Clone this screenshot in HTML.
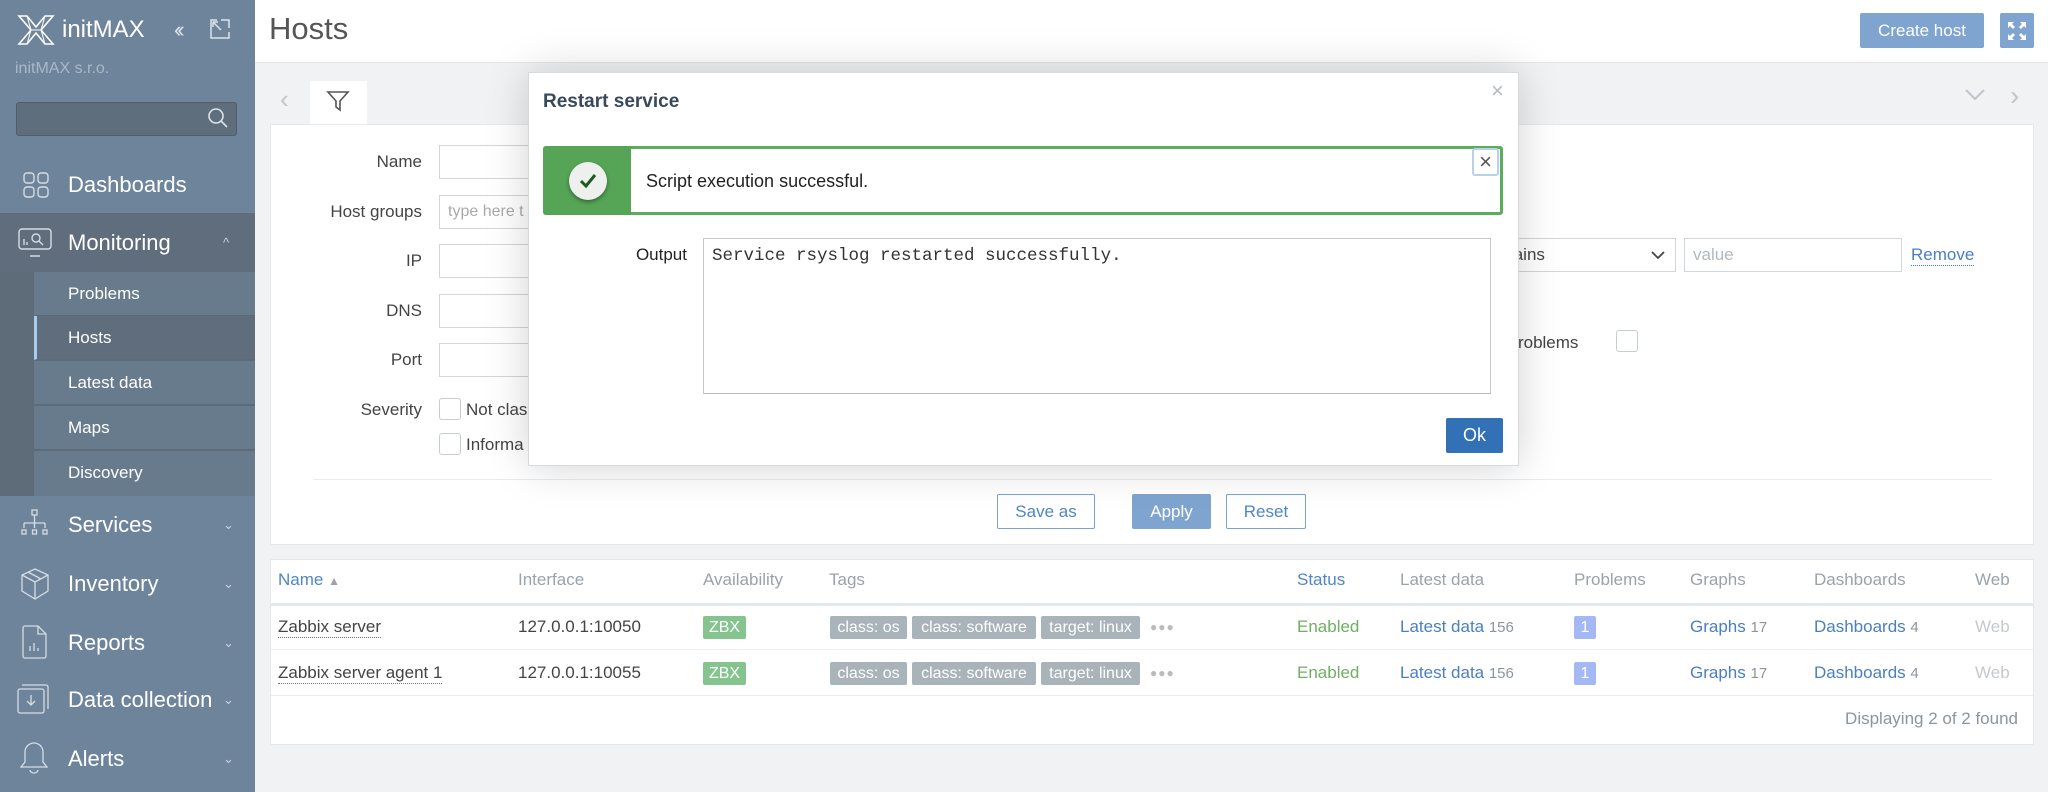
<!DOCTYPE html>
<html><head><meta charset="utf-8"><style>
*{box-sizing:border-box;margin:0;padding:0}
body{width:2048px;height:792px;overflow:hidden;background:#f0f2f4;font-family:"Liberation Sans",sans-serif;position:relative;color:#444}
.a{position:absolute}
#sb{left:0;top:0;width:255px;height:792px;background:#6e849b}
.mi{position:absolute;left:0;width:255px;color:#fff;font-size:22px}
.mi span{position:absolute;left:68px}
.chev{position:absolute;left:223px;color:#c9d3dc;font-size:13px}
.sub{position:absolute;left:34px;width:221px;height:44px;background:#687b8c;border-bottom:1px solid #5a6a78;color:#fff;font-size:17px;line-height:44px;padding-left:34px}
.lbl{position:absolute;width:150px;text-align:right;left:272px;font-size:17px;color:#444}
.inp{position:absolute;left:439px;width:100px;height:34px;border:1px solid #d0d6db;background:#fff}
.cb{position:absolute;width:22px;height:22px;border:1px solid #c5ccd2;border-radius:3px;background:#fff}
.btn{position:absolute;height:35px;border:1px solid #7aa3cf;border-radius:2px;color:#4f86c6;font-size:17px;text-align:center;line-height:33px;background:#fff}
.th{position:absolute;top:570px;font-size:17px;color:#9aa2aa}
.td{position:absolute;font-size:17px;color:#444}
.tag{position:absolute;height:23px;background:#a9b3ba;color:#fff;font-size:16px;line-height:23px;border-radius:2px;text-align:center;white-space:nowrap}
.lnk{color:#4a7fc1}
.cnt{color:#8d959c;font-size:15px}
.dots{position:absolute;color:#bbb;font-size:12px;letter-spacing:1px}
</style></head><body>
<div id="sb" class="a">
 <svg class="a" style="left:17px;top:14px" width="38" height="32" viewBox="0 0 38 32" fill="none" stroke="#fff" stroke-width="1.6"><path d="M2 2h8l9 11 9-11h8L24 16l12 14h-8l-9-11-9 11H2l12-14z"/><path d="M10 2l4 14-4 14M28 2l-4 14 4 14M14 16h10" stroke-width="1"/></svg>
 <div class="a" style="left:62px;top:16px;color:#fff;font-size:24px">initMAX</div>
 <div class="a" style="left:174px;top:17px;color:#dbe3ea;font-size:22px;letter-spacing:-4px">‹‹</div>
 <svg class="a" style="left:210px;top:19px" width="20" height="20" viewBox="0 0 20 20" fill="none" stroke="#dbe3ea" stroke-width="1.5"><path d="M7 1H1v18h18V13M3 3l8 8M3 3h5M3 3v5" /><path d="M11 1h8v8"/></svg>
 <div class="a" style="left:15px;top:60px;color:#a9b8c7;font-size:16px">initMAX s.r.o.</div>
 <div class="a" style="left:16px;top:102px;width:221px;height:34px;background:#5f6e7c;border:1px solid #515d68;border-radius:3px"></div>
 <svg class="a" style="left:206px;top:106px" width="24" height="24" viewBox="0 0 24 24" fill="none" stroke="#dbe3ea" stroke-width="1.6"><circle cx="10" cy="10" r="7"/><path d="M15 15l6 6"/></svg>
 <div class="mi" style="top:165px;height:40px;line-height:40px"><svg class="a" style="left:23px;top:7px" width="26" height="26" viewBox="0 0 26 26" fill="none" stroke="#d5dde5" stroke-width="1.4"><rect x="1" y="1" width="10" height="10" rx="3"/><rect x="15" y="1" width="10" height="10" rx="3"/><rect x="1" y="15" width="10" height="10" rx="3"/><rect x="15" y="15" width="10" height="10" rx="3"/></svg><span>Dashboards</span></div>
 <div class="a" style="left:0;top:213px;width:255px;height:283px;background:#5e6b79"></div>
 <div class="mi" style="top:213px;height:59px;line-height:59px;background:#5f6d7c"><svg class="a" style="left:18px;top:15px" width="34" height="30" viewBox="0 0 34 30" fill="none" stroke="#d5dde5" stroke-width="1.4"><rect x="1" y="1" width="32" height="20" rx="3"/><path d="M12 28h10M6 17v-6M9 17v-3"/><circle cx="18" cy="10" r="4"/><path d="M21 13l4 4"/></svg><span>Monitoring</span><i class="chev" style="top:0;font-style:normal">^</i></div>
 <div class="sub" style="top:272px">Problems</div>
 <div class="sub" style="top:316px;background:#5f6d7c;border-left:3px solid #a8ccf0;padding-left:31px">Hosts</div>
 <div class="sub" style="top:361px">Latest data</div>
 <div class="sub" style="top:406px">Maps</div>
 <div class="sub" style="top:451px;border-bottom:none;height:45px">Discovery</div>
 <div class="mi" style="top:505px;height:40px;line-height:40px"><svg class="a" style="left:20px;top:4px" width="30" height="30" viewBox="0 0 30 30" fill="none" stroke="#d5dde5" stroke-width="1.3"><rect x="12" y="1" width="5" height="5"/><path d="M14.5 6v8M4 14h21M4 14v5M14.5 14v5M25 14v5"/><rect x="2" y="21" width="4" height="4"/><rect x="12.5" y="21" width="4" height="4"/><rect x="23" y="21" width="4" height="4"/></svg><span>Services</span><i class="chev" style="font-style:normal">⌄</i></div>
 <div class="mi" style="top:564px;height:40px;line-height:40px"><svg class="a" style="left:20px;top:3px" width="30" height="34" viewBox="0 0 30 34" fill="none" stroke="#d5dde5" stroke-width="1.3"><path d="M15 2l13 6v16l-13 8-13-8V8z"/><path d="M2 8l13 7 13-7M15 15v17M8 5l13 7"/></svg><span>Inventory</span><i class="chev" style="font-style:normal">⌄</i></div>
 <div class="mi" style="top:623px;height:40px;line-height:40px"><svg class="a" style="left:22px;top:2px" width="26" height="34" viewBox="0 0 26 34" fill="none" stroke="#d5dde5" stroke-width="1.3"><path d="M3 1h13l8 8v22a2 2 0 0 1-2 2H3a2 2 0 0 1-2-2V3a2 2 0 0 1 2-2z"/><path d="M16 1v8h8M8 26v-5M12 26v-8M16 26v-3"/></svg><span>Reports</span><i class="chev" style="font-style:normal">⌄</i></div>
 <div class="mi" style="top:680px;height:40px;line-height:40px"><svg class="a" style="left:17px;top:4px" width="34" height="30" viewBox="0 0 34 30" fill="none" stroke="#d5dde5" stroke-width="1.3"><rect x="1" y="5" width="26" height="24" rx="2"/><path d="M5 1h24a2 2 0 0 1 2 2v22M14 11v10M10 17l4 4 4-4"/></svg><span>Data collection</span><i class="chev" style="font-style:normal">⌄</i></div>
 <div class="mi" style="top:739px;height:40px;line-height:40px"><svg class="a" style="left:20px;top:2px" width="28" height="34" viewBox="0 0 28 34" fill="none" stroke="#d5dde5" stroke-width="1.3"><path d="M14 2a9 9 0 0 1 9 9v10l4 5H1l4-5V11a9 9 0 0 1 9-9zM10 29a4 3 0 0 0 8 0"/></svg><span>Alerts</span><i class="chev" style="font-style:normal">⌄</i></div>
</div>

<div class="a" style="left:255px;top:0;width:1793px;height:63px;background:#fff;border-bottom:1px solid #e3e6e9"></div>
<div class="a" style="left:269px;top:11px;font-size:31px;color:#555">Hosts</div>
<div class="a" style="left:1860px;top:13px;width:124px;height:35px;background:#7ea4cf;border-radius:2px;color:#fff;font-size:17px;text-align:center;line-height:35px">Create host</div>
<div class="a" style="left:2000px;top:13px;width:34px;height:35px;background:#7ea4cf;border-radius:2px"><svg class="a" style="left:7px;top:8px" width="20" height="20" viewBox="0 0 20 20" fill="#fff"><path d="M1 1h6L5 3l3 3-2 2-3-3-2 2zM19 1v6l-2-2-3 3-2-2 3-3-2-2zM1 19v-6l2 2 3-3 2 2-3 3 2 2zM19 19h-6l2-2-3-3 2-2 3 3 2-2z"/></svg></div>

<div class="a" style="left:280px;top:84px;color:#c0c6cc;font-size:26px">‹</div>
<div class="a" style="left:310px;top:81px;width:57px;height:44px;background:#fff"><svg class="a" style="left:16px;top:8px" width="24" height="24" viewBox="0 0 24 24" fill="none" stroke="#555" stroke-width="1.6"><path d="M2 3h20l-8 9v9l-4-3v-6z"/></svg></div>
<svg class="a" style="left:1964px;top:88px" width="22" height="14" viewBox="0 0 22 14" fill="none" stroke="#c0c6cc" stroke-width="2"><path d="M2 2l9 9 9-9"/></svg>
<div class="a" style="left:2010px;top:80px;color:#c0c6cc;font-size:28px">›</div>

<div class="a" style="left:270px;top:124px;width:1764px;height:421px;background:#fff;border:1px solid #e6e9eb"></div>
<div class="lbl" style="top:152px">Name</div><div class="inp" style="top:145px"></div>
<div class="lbl" style="top:202px">Host groups</div><div class="inp" style="top:195px;color:#aaa;font-size:16px;line-height:32px;padding-left:8px">type here t</div>
<div class="lbl" style="top:251px">IP</div><div class="inp" style="top:244px"></div>
<div class="lbl" style="top:301px">DNS</div><div class="inp" style="top:294px"></div>
<div class="lbl" style="top:350px">Port</div><div class="inp" style="top:343px"></div>
<div class="lbl" style="top:400px">Severity</div><div class="cb" style="left:439px;top:398px"></div><div class="td" style="left:466px;top:400px">Not clas</div>
<div class="cb" style="left:439px;top:433px"></div><div class="td" style="left:466px;top:435px">Informa</div>
<div class="a" style="left:1500px;top:238px;width:176px;height:34px;border:1px solid #d0d6db;font-size:17px;line-height:32px;padding-left:8px">tains<svg class="a" style="left:150px;top:12px" width="14" height="9" viewBox="0 0 14 9" fill="none" stroke="#444" stroke-width="1.8"><path d="M1 1l6 6 6-6"/></svg></div>
<div class="a" style="left:1684px;top:238px;width:218px;height:34px;border:1px solid #d0d6db;font-size:17px;line-height:32px;padding-left:8px;color:#b3b8bd">value</div>
<div class="a" style="left:1911px;top:245px;font-size:17px;color:#4a7fc1;border-bottom:1px dotted #4a7fc1">Remove</div>
<div class="td" style="left:1500px;top:333px">l problems</div><div class="cb" style="left:1616px;top:330px"></div>
<div class="a" style="left:313px;top:479px;width:1679px;height:1px;background:#e9ecee"></div>
<div class="btn" style="left:997px;top:494px;width:98px">Save as</div>
<div class="btn" style="left:1132px;top:494px;width:79px;background:#7ea4cf;border-color:#7ea4cf;color:#fff">Apply</div>
<div class="btn" style="left:1226px;top:494px;width:80px">Reset</div>

<div class="a" style="left:270px;top:559px;width:1764px;height:186px;background:#fff;border:1px solid #e6e9eb"></div>
<div class="a" style="left:271px;top:603px;width:1762px;height:3px;background:#e6e9eb"></div>
<div class="a" style="left:271px;top:649px;width:1762px;height:1px;background:#eceef0"></div>
<div class="a" style="left:271px;top:695px;width:1762px;height:1px;background:#eceef0"></div>
<div class="th" style="left:278px;color:#4f86c6">Name <span style="font-size:12px;color:#9aa2aa">▲</span></div>
<div class="th" style="left:518px">Interface</div><div class="th" style="left:703px">Availability</div><div class="th" style="left:829px">Tags</div>
<div class="th" style="left:1297px;color:#4f86c6">Status</div><div class="th" style="left:1400px">Latest data</div><div class="th" style="left:1574px">Problems</div><div class="th" style="left:1690px">Graphs</div><div class="th" style="left:1814px">Dashboards</div><div class="th" style="left:1975px">Web</div>

<div class="td" style="left:278px;top:617px;border-bottom:1px dotted #777">Zabbix server</div>
<div class="td" style="left:518px;top:617px">127.0.0.1:10050</div>
<div class="tag" style="left:703px;top:616px;width:43px;background:#86c48f">ZBX</div>
<div class="tag" style="left:830px;top:616px;width:77px">class: os</div><div class="tag" style="left:912px;top:616px;width:124px">class: software</div><div class="tag" style="left:1041px;top:616px;width:99px">target: linux</div>
<div class="dots" style="left:1150px;top:620px">●●●</div>
<div class="td" style="left:1297px;top:617px;color:#6fb062">Enabled</div>
<div class="td lnk" style="left:1400px;top:617px">Latest data <span class="cnt">156</span></div>
<div class="tag" style="left:1574px;top:616px;width:22px;background:#a4b9f3">1</div>
<div class="td lnk" style="left:1690px;top:617px">Graphs <span class="cnt">17</span></div>
<div class="td lnk" style="left:1814px;top:617px">Dashboards <span class="cnt">4</span></div>
<div class="td" style="left:1975px;top:617px;color:#c5c9cd">Web</div>

<div class="td" style="left:278px;top:663px;border-bottom:1px dotted #777">Zabbix server agent 1</div>
<div class="td" style="left:518px;top:663px">127.0.0.1:10055</div>
<div class="tag" style="left:703px;top:662px;width:43px;background:#86c48f">ZBX</div>
<div class="tag" style="left:830px;top:662px;width:77px">class: os</div><div class="tag" style="left:912px;top:662px;width:124px">class: software</div><div class="tag" style="left:1041px;top:662px;width:99px">target: linux</div>
<div class="dots" style="left:1150px;top:666px">●●●</div>
<div class="td" style="left:1297px;top:663px;color:#6fb062">Enabled</div>
<div class="td lnk" style="left:1400px;top:663px">Latest data <span class="cnt">156</span></div>
<div class="tag" style="left:1574px;top:662px;width:22px;background:#a4b9f3">1</div>
<div class="td lnk" style="left:1690px;top:663px">Graphs <span class="cnt">17</span></div>
<div class="td lnk" style="left:1814px;top:663px">Dashboards <span class="cnt">4</span></div>
<div class="td" style="left:1975px;top:663px;color:#c5c9cd">Web</div>
<div class="td" style="left:1780px;top:709px;width:238px;text-align:right;color:#8d959c">Displaying 2 of 2 found</div>

<div class="a" style="left:528px;top:72px;width:991px;height:394px;background:#fff;border:1px solid #d5dadf;box-shadow:0 0 40px rgba(0,0,0,0.18)"></div>
<div class="a" style="left:543px;top:91px;font-size:19px;font-weight:bold;color:#384959">Restart service</div>
<div class="a" style="left:1491px;top:78px;font-size:22px;color:#b5bbc0">×</div>
<div class="a" style="left:543px;top:146px;width:960px;height:69px;border:3px solid #5aae5b;border-radius:3px;background:#fff"></div>
<div class="a" style="left:543px;top:146px;width:88px;height:69px;background:#56a556;border-radius:3px 0 0 3px"></div>
<div class="a" style="left:569px;top:162px;width:38px;height:38px;border-radius:50%;background:#eef0ee;box-shadow:0 2px 4px rgba(0,0,0,0.4)"><svg class="a" style="left:9px;top:9px" width="20" height="20" viewBox="0 0 20 20" fill="none" stroke="#1f5a24" stroke-width="3"><path d="M3 10l5 5 9-11"/></svg></div>
<div class="a" style="left:646px;top:171px;font-size:18px;color:#222">Script execution successful.</div>
<div class="a" style="left:1472px;top:148px;width:27px;height:28px;border:2px solid #b9d0ea;border-radius:3px;background:#fff;color:#555;font-size:22px;text-align:center;line-height:23px">×</div>
<div class="a" style="left:620px;top:245px;width:67px;text-align:right;font-size:17px;color:#222">Output</div>
<div class="a" style="left:703px;top:238px;width:788px;height:156px;border:1px solid #c3c9ce;border-bottom-color:#b5bcc2;padding:7px 8px;font-family:'Liberation Mono',monospace;font-size:17.5px;color:#333">Service rsyslog restarted successfully.</div>
<div class="a" style="left:1446px;top:418px;width:57px;height:35px;background:#3271b6;border-radius:2px;color:#fff;font-size:18px;text-align:center;line-height:35px">Ok</div>
</body></html>
